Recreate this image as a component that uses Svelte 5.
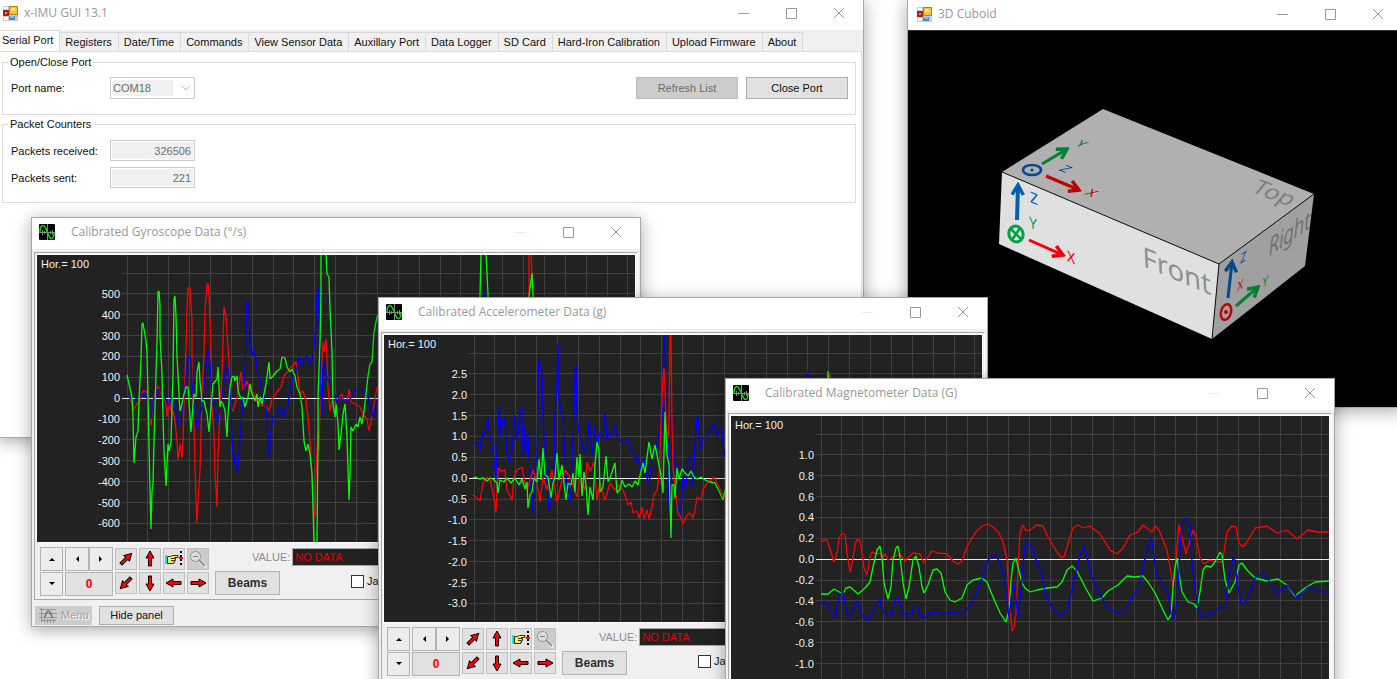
<script lang="ts">
  const tabs = [
    'Serial Port',
    'Registers',
    'Date/Time',
    'Commands',
    'View Sensor Data',
    'Auxillary Port',
    'Data Logger',
    'SD Card',
    'Hard-Iron Calibration',
    'Upload Firmware',
    'About',
  ];

  let activeTab = $state('Serial Port');

  // plot area, in chart units
  const chart = { width: 598, height: 287, left: 90, top: 18, step: 20.87, zero: 143 };
  const columns = Array.from({ length: 25 }, (_, i) => chart.left + i * chart.step);
  const rows = Array.from({ length: 13 }, (_, i) => chart.top + i * chart.step);

  const scopes = [
    {
      id: 'gyro',
      title: 'Calibrated Gyroscope Data (°/s)',
      labels: ['500', '400', '300', '200', '100', '0', '-100', '-200', '-300', '-400', '-500', '-600'],
      traces: [
        {
          color: '#ff0000',
          points: '90,141 93,142 95,149 97,154 100,149 103,146 106,136 110,137 112,149 114,171 116,146 118,139 121,131 123,136 126,142 129,149 130,162 132,146 135,159 136,156 138,166 140,186 141,205 143,189 145,203 146,186 147,149 149,94 150,54 151,33 153,33 154,51 155,64 155,119 157,169 158,212 159,246 160,268 161,246 163,216 164,179 165,139 167,97 168,54 170,30 171,28 172,41 173,64 174,97 175,152 177,179 178,219 179,234 180,252 181,202 183,152 185,119 186,87 187,52 189,61 190,77 192,107 193,152 196,156 199,146 201,139 203,122 204,117 206,136 210,126 213,136 216,137 220,146 225,151 228,149 232,156 235,144 240,137 244,132 247,121 251,116 255,111 259,107 261,121 263,139 266,136 269,146 271,162 273,186 275,219 277,262 278,262 279,219 281,176 282,196 283,152 285,104 286,87 287,97 289,84 290,104 291,132 293,156 295,146 297,149 301,144 305,139 307,147 310,146 312,134 314,147 318,149 323,152 326,159 330,164 332,176 335,162 337,149 340,132 370,150 420,120 470,150 490,90 492,39 492,-2 494,-2 496,41 500,150',
        },
        {
          color: '#0000ff',
          points: '90,141 93,143 96,145 103,142 108,137 111,146 114,164 116,146 119,139 121,134 125,137 128,142 131,151 135,142 137,149 139,159 141,171 144,166 146,149 148,132 150,111 152,101 154,104 155,126 157,152 160,174 163,159 165,152 167,132 170,104 171,94 173,107 175,146 178,157 181,167 183,152 186,136 188,117 190,109 192,121 194,149 195,186 197,209 198,199 200,218 202,199 204,172 206,142 208,121 209,77 210,47 212,47 213,87 215,101 217,93 219,104 221,121 223,124 225,139 228,146 230,162 231,192 232,202 234,176 236,162 240,159 242,152 245,156 246,162 248,154 251,149 253,136 256,122 260,114 262,101 265,111 267,104 270,101 273,109 276,102 278,81 280,41 281,31 282,54 283,119 285,162 286,111 288,107 290,124 293,127 296,134 300,147 303,142 308,147 313,144 318,136 323,134 328,136 331,142 336,162 340,146 380,120 440,130 448,37 452,140',
        },
        {
          color: '#00ff00',
          points: '90,120 95,142 96,162 97,208 99,182 101,176 102,146 104,104 105,69 106,68 109,86 110,97 111,142 113,236 114,274 115,236 116,229 117,186 119,119 120,87 121,37 122,36 123,51 123,81 125,119 126,162 127,196 129,231 130,209 131,189 132,196 134,187 135,149 136,119 137,44 138,41 139,61 140,101 142,139 143,156 145,149 147,139 149,132 151,132 153,162 154,177 156,149 157,139 159,142 160,117 162,107 163,126 165,146 167,146 170,159 172,177 174,152 176,129 180,124 181,112 183,152 184,146 186,149 188,156 190,182 191,159 193,132 195,122 197,121 198,126 200,121 201,136 204,144 206,142 208,152 211,142 213,129 215,139 218,146 220,139 221,152 223,142 225,149 229,129 231,114 232,107 233,124 236,121 240,116 243,114 245,102 248,103 250,112 253,117 255,114 258,121 260,132 263,139 265,152 267,186 269,196 271,189 273,199 275,219 276,252 277,288 280,288 281,186 281,142 283,87 284,37 284,-2 289,-2 290,19 292,22 293,54 295,97 296,149 298,162 299,149 301,169 302,195 304,179 306,159 308,149 310,182 312,245 313,219 314,172 316,176 319,169 321,172 323,162 325,169 327,156 329,139 331,121 333,109 335,107 337,77 340,62 346,50 360,150 430,140 443,41 444,-2 449,-2 451,39 455,140 488,140 492,41 495,18 496,40 500,150',
        },
      ],
    },
    {
      id: 'accel',
      title: 'Calibrated Accelerometer Data (g)',
      labels: ['2.5', '2.0', '1.5', '1.0', '0.5', '0.0', '-0.5', '-1.0', '-1.5', '-2.0', '-2.5', '-3.0'],
      traces: [
        {
          color: '#0000ff',
          points: '89,108 93,108 96,115 98,98 99,103 103,88 104,82 106,102 109,115 112,145 113,115 115,72 116,102 117,82 119,92 121,82 123,118 125,127 128,115 131,80 132,105 134,98 136,75 138,73 139,122 141,92 142,118 144,98 145,122 148,162 149,178 150,142 153,122 154,55 155,25 157,35 158,38 159,82 161,118 163,148 165,177 168,155 170,135 171,78 173,55 174,8 175,62 177,78 179,83 181,122 183,158 186,167 188,128 190,82 191,35 192,29 193,78 195,98 198,108 200,118 203,112 205,85 207,105 208,120 211,90 213,122 215,98 219,102 221,78 223,105 225,98 229,100 231,90 233,102 238,107 244,105 248,115 251,122 253,128 254,120 257,135 260,125 263,142 265,150 268,122 271,118 275,98 277,115 278,88 280,-2 281,-2 282,115 284,88 285,168 287,202 288,82 290,122 292,128 294,172 297,178 299,142 302,152 304,123 307,122 309,152 311,108 313,82 314,82 316,115 319,103 323,102 327,95 330,88 333,102 337,92 339,108 341,122 400,110 422,80 424,36 426,90',
        },
        {
          color: '#ff0000',
          points: '89,160 93,163 96,166 99,148 103,142 106,145 109,158 112,177 114,135 115,133 117,136 121,135 123,155 128,165 130,142 133,135 138,132 140,143 143,155 146,145 149,135 153,148 156,167 159,142 163,155 168,135 173,167 178,145 181,135 186,142 193,162 196,142 201,155 203,127 206,136 208,132 210,127 213,165 216,148 221,165 226,148 231,155 234,150 239,155 242,163 244,170 247,167 249,178 253,176 255,183 258,172 260,184 263,175 265,184 268,172 270,160 273,155 275,142 277,88 279,42 280,33 281,55 283,115 285,88 286,-2 287,-2 288,88 289,132 291,152 294,178 297,183 299,189 303,180 306,178 309,183 311,175 313,162 317,165 319,155 323,148 327,145 330,142 333,148 338,158 341,163 400,150 440,120 446,38 450,140',
        },
        {
          color: '#00ff00',
          points: '89,143 92,142 95,144 99,143 103,146 106,143 109,144 113,148 114,158 116,145 120,147 123,143 127,148 131,143 135,150 138,144 141,154 143,147 144,173 146,160 148,157 150,143 153,147 155,124 157,145 159,113 161,140 164,142 167,163 169,148 171,142 173,118 175,145 178,130 180,149 182,165 184,148 187,150 189,138 191,157 193,122 195,142 196,119 198,161 200,137 202,150 204,180 206,152 209,165 211,130 213,107 215,115 216,157 219,152 222,121 224,147 227,140 231,128 233,158 236,154 238,145 241,152 245,149 248,152 251,146 254,150 257,136 259,128 261,138 265,107 268,124 271,110 273,120 277,140 279,158 281,77 283,120 285,130 287,203 288,150 290,150 291,163 293,133 295,144 298,134 301,138 304,141 307,136 310,142 313,144 317,142 321,145 326,147 331,148 336,158 339,165 341,155 400,150 440,120 444,36 450,140',
        },
      ],
    },
    {
      id: 'magneto',
      title: 'Calibrated Magnetometer Data (G)',
      labels: ['1.0', '0.8', '0.6', '0.4', '0.2', '0.0', '-0.2', '-0.4', '-0.6', '-0.8', '-1.0'],
      traces: [
        {
          color: '#ff0000',
          points: '90,126 93,124 96,124 100,136 103,146 106,137 108,122 111,117 114,119 116,137 119,156 121,147 124,129 126,123 129,125 131,137 133,152 136,159 139,141 141,136 146,138 149,137 151,142 154,138 157,144 162,141 169,138 174,145 182,137 189,138 193,147 201,135 207,137 216,138 222,145 227,148 231,145 236,131 244,117 251,110 257,108 262,111 268,117 272,126 276,144 278,181 281,215 283,212 285,197 287,154 289,117 292,109 295,115 301,113 305,109 312,110 317,121 326,136 330,141 333,141 339,121 342,112 347,109 352,112 359,110 369,118 379,134 386,138 392,132 399,119 407,116 412,109 421,116 424,110 428,114 436,134 439,151 442,171 444,154 446,131 448,109 451,121 455,138 459,124 462,114 465,121 469,142 473,148 479,144 486,146 491,146 493,136 496,116 501,110 505,111 508,127 512,131 516,126 524,112 536,110 546,117 556,114 566,123 577,114 586,116 598,116',
        },
        {
          color: '#00ff00',
          points: '90,178 97,178 103,173 112,178 115,172 119,171 127,178 134,172 139,166 142,151 146,134 149,130 151,141 153,167 157,183 160,171 162,144 165,132 167,130 169,141 172,167 175,183 178,171 182,144 185,140 188,151 191,171 193,177 197,169 202,154 206,153 210,157 214,176 219,184 224,186 231,182 236,169 242,164 251,162 256,166 262,181 269,197 275,206 278,194 280,164 282,147 285,142 287,151 291,167 294,172 299,176 306,174 316,172 326,171 331,166 336,154 341,150 346,155 354,171 362,185 371,182 377,175 387,169 396,160 404,161 412,160 417,166 424,177 432,194 437,204 440,199 442,171 444,151 446,142 448,157 451,176 457,186 463,188 466,192 469,176 472,154 475,150 480,151 484,146 489,136 491,139 494,164 498,177 504,166 508,149 511,147 516,154 524,162 536,165 547,163 556,169 564,180 574,172 584,166 598,165',
        },
        {
          color: '#0000ff',
          points: '90,187 94,185 97,188 101,197 104,201 106,192 109,179 112,176 114,187 117,201 120,202 124,187 127,185 131,199 136,204 142,196 146,187 149,184 153,197 161,199 164,184 167,182 172,198 181,198 183,189 186,190 190,200 194,201 199,197 206,196 212,198 222,196 231,198 237,192 244,181 251,162 257,144 264,139 269,146 274,167 278,201 280,184 282,167 284,174 287,201 290,174 292,151 294,129 296,126 301,131 306,147 311,157 314,177 321,192 330,200 336,194 341,174 346,151 350,136 353,130 356,141 361,161 367,174 376,191 386,197 394,194 401,181 408,172 412,151 416,134 420,122 422,131 425,157 431,167 437,177 440,197 443,203 446,187 448,154 450,117 453,104 456,102 459,109 461,147 464,174 467,191 471,201 481,198 489,191 494,192 497,167 502,142 504,144 506,167 510,187 516,184 524,162 533,157 539,167 546,177 556,169 567,182 577,171 587,175 598,176',
        },
      ],
    },
  ];

  const arrows = {
    'up-right': 45,
    up: 0,
    'down-left': 225,
    down: 180,
    left: 270,
    right: 90,
  };
</script>

{#snippet formIcon()}
  <svg class="app-icon" width="15" height="15" viewBox="0 0 15 15" aria-hidden="true">
    <rect width="15" height="15" fill="#c8ccd2" />
    <path d="M1 1h4v2H1zM1 11h4v3H1z" fill="#fff" />
    <rect x="6" y="0" width="9" height="9" fill="#b8860b" />
    <rect x="7" y="1" width="7" height="7" fill="#f9c22e" />
    <rect x="8" y="2" width="4" height="3" fill="#fde08a" />
    <rect x="0" y="4" width="6" height="6" fill="#a3221a" />
    <rect x="2" y="6" width="2" height="2" fill="#f08a7c" />
    <rect x="6" y="10" width="6" height="4" fill="#3b8fe0" />
    <rect x="7" y="10" width="4" height="2" fill="#7fbcf2" />
  </svg>
{/snippet}

{#snippet scopeIcon()}
  <svg class="app-icon" width="16" height="16" viewBox="0 0 16 16" aria-hidden="true">
    <rect width="16" height="16" rx="1" fill="#000" />
    <path d="M8.500 0v16M0 8.500h16M3.500 6v5M5.500 7v3M11.500 7v3M13.500 6v5" stroke="#8a8a8a" />
    <path d="M1 8C1 4 2 1.500 4 1.500S7 5 8.500 8.500s2 6 4 6S15 11 15 8" fill="none" stroke="#00e000" stroke-width="1.500" />
  </svg>
{/snippet}

{#snippet windowButtons()}
  <div class="window-buttons">
    <button class="win-btn minimize" aria-label="Minimize">
      <svg width="12" height="12" viewBox="0 0 12 12"><path d="M1 6.500h11" /></svg>
    </button>
    <button class="win-btn" aria-label="Maximize">
      <svg width="12" height="12" viewBox="0 0 12 12"><path d="M1.500 1.500h10v10h-10z" /></svg>
    </button>
    <button class="win-btn" aria-label="Close">
      <svg width="12" height="12" viewBox="0 0 12 12"><path d="M1 1l10 10M11 1L1 11" /></svg>
    </button>
  </div>
{/snippet}

{#snippet arrowButton(name)}
  <button class="tool-btn" aria-label={name}>
    <svg width="18" height="18" viewBox="0 0 18 18">
      <path
        d="M9 1l4 7h-2.500v8h-3V8H5z"
        fill="#ff0000"
        stroke="#000"
        transform="rotate({arrows[name]} 9 9)"
      />
    </svg>
  </button>
{/snippet}

<div class="desktop">
  <section class="window main-window">
    <header class="title-bar">
      {@render formIcon()}
      <h1>x-IMU GUI 13.1</h1>
      {@render windowButtons()}
    </header>

    <nav class="tab-strip">
      {#each tabs as tab}
        <button class="tab" class:active={tab === activeTab} onclick={() => (activeTab = tab)}>{tab}</button>
      {/each}
    </nav>

    <div class="tab-page">
      <fieldset class="port-group">
        <legend>Open/Close Port</legend>
        <div class="field">
          <label for="port-name">Port name:</label>
          <div class="select-wrap">
            <select id="port-name" disabled>
              <option>COM18</option>
            </select>
            <svg class="chevron" width="10" height="6" viewBox="0 0 10 6" aria-hidden="true">
              <path d="M1 1l4 4 4-4" />
            </svg>
          </div>
        </div>
        <div class="port-actions">
          <button class="push-btn" disabled>Refresh List</button>
          <button class="push-btn">Close Port</button>
        </div>
      </fieldset>

      <fieldset class="counter-group">
        <legend>Packet Counters</legend>
        <div class="field">
          <label for="received">Packets received:</label>
          <input id="received" type="text" value="326506" disabled />
        </div>
        <div class="field">
          <label for="sent">Packets sent:</label>
          <input id="sent" type="text" value="221" disabled />
        </div>
      </fieldset>
    </div>
  </section>

  <section class="window cuboid-window">
    <header class="title-bar">
      {@render formIcon()}
      <h1>3D Cuboid</h1>
      {@render windowButtons()}
    </header>
    <div class="viewport">
      <svg class="cuboid" width="489" height="377" viewBox="0 1 489 377">
        <defs>
          {#each [['red', '#f00000'], ['dark-red', '#c00000'], ['green', '#007f35'], ['blue', '#0060b0'], ['dark-blue', '#004a8c']] as [id, color]}
            <marker id="head-{id}" viewBox="0 0 10 10" refX="8" refY="5" markerWidth="14" markerHeight="14" markerUnits="userSpaceOnUse" orient="auto">
              <path d="M1 1l7 4-7 4" fill="none" stroke={color} stroke-width="2.500" />
            </marker>
          {/each}
        </defs>

        <polygon points="195,79 406,164 311,234 94,142" fill="#b0b0b0" />
        <polygon points="94,142 311,234 304,309 91,214" fill="#e0e0e0" />
        <polygon points="311,234 406,164 397,236 304,309" fill="#a0a0a0" />
        <path d="M94 142L311 234L406 164M311 234L304 309" fill="none" stroke="#111" />

        <!-- top face -->
        <ellipse cx="124" cy="140" rx="9" ry="5" fill="none" stroke="#004a8c" stroke-width="2.500" />
        <circle cx="124" cy="140" r="1.500" fill="#004a8c" />
        <path d="M134 134L159 119" stroke="#007f35" stroke-width="3" marker-end="url(#head-green)" />
        <path d="M138 146L171 160" stroke="#c00000" stroke-width="3" marker-end="url(#head-dark-red)" />
        <text class="axis" transform="matrix(.9 .35 -.7 .5 166 115)" fill="#007f35">Y</text>
        <text class="axis" transform="matrix(.9 .35 -.7 .5 150 140)" fill="#004a8c">Z</text>
        <text class="axis" transform="matrix(.9 .35 -.7 .5 176 164)" fill="#c00000">X</text>
        <text class="face" transform="matrix(.82 .33 -.5 .6 342 161)" fill="#808080">Top</text>

        <!-- front face -->
        <path d="M109 190L110 155" stroke="#0060b0" stroke-width="4" marker-end="url(#head-blue)" />
        <path d="M121 210L155 225" stroke="#f00000" stroke-width="3" marker-end="url(#head-red)" />
        <ellipse cx="108" cy="204" rx="7" ry="8" fill="#e0e0e0" stroke="#00a048" stroke-width="3" transform="rotate(-20 108 204)" />
        <path d="M103 199l10 10M112 198l-8 12" stroke="#00a048" stroke-width="2.500" />
        <text class="axis" transform="matrix(.93 .4 0 1 122 172)" fill="#0060b0">Z</text>
        <text class="axis" transform="matrix(.93 .4 0 1 121 197)" fill="#00a048">Y</text>
        <text class="axis" transform="matrix(.93 .4 0 1 159 231)" fill="#f00000">X</text>
        <text class="face" transform="matrix(.98 .42 .05 1 235 236)" fill="#909090">Front</text>

        <!-- right face -->
        <ellipse cx="318" cy="282" rx="5" ry="8" fill="none" stroke="#c00000" stroke-width="2.500" transform="rotate(15 318 282)" />
        <circle cx="318" cy="282" r="2" fill="#c00000" />
        <path d="M320 268L324 232" stroke="#004a8c" stroke-width="3" marker-end="url(#head-dark-blue)" />
        <path d="M328 276L350 257" stroke="#007f35" stroke-width="3" marker-end="url(#head-green)" />
        <text class="axis" transform="matrix(.65 -.45 -.1 .9 332 234)" fill="#004a8c">Z</text>
        <text class="axis" transform="matrix(.65 -.45 -.1 .9 329 262)" fill="#c00000">X</text>
        <text class="axis" transform="matrix(.65 -.45 -.1 .9 354 258)" fill="#007f35">Y</text>
        <text class="face" transform="matrix(.6 -.42 -.1 .95 360 227)" fill="#707070">Right</text>
      </svg>
    </div>
  </section>

  {#each scopes as scope}
    <section class="window scope-window {scope.id}">
      <header class="title-bar">
        {@render scopeIcon()}
        <h1>{scope.title}</h1>
        {@render windowButtons()}
      </header>

      <div class="scope-frame">
        <svg class="plot" viewBox="0 0 {chart.width} {chart.height}">
          <rect width={chart.width} height={chart.height} fill="#222222" />
          <g class="grid">
            {#each columns as x}
              <line x1={x} y1="0" x2={x} y2={chart.height} />
            {/each}
            {#each rows as y}
              <line x1="85" y1={y} x2={chart.width} y2={y} />
            {/each}
          </g>
          <line class="zero" x1="85" y1={chart.zero} x2={chart.width} y2={chart.zero} />
          {#each scope.traces as trace}
            <polyline class="trace" points={trace.points} stroke={trace.color} />
          {/each}
          <text class="plot-text" x="4" y="13">Hor.= 100</text>
          {#each scope.labels as label, i}
            <text class="plot-text" x="83" y={chart.top + (i + 1) * chart.step + 4} text-anchor="end">{label}</text>
          {/each}
        </svg>

        <div class="panel">
          <div class="stepper">
            <button class="flat-btn" aria-label="Increase"><svg width="6" height="4"><path d="M0 4l3-3 3 3z" /></svg></button>
            <button class="flat-btn" aria-label="Decrease"><svg width="6" height="4"><path d="M0 0l3 3 3-3z" /></svg></button>
          </div>
          <div class="shifter">
            <button class="flat-btn" aria-label="Previous"><svg width="4" height="6"><path d="M4 0L1 3l3 3z" /></svg></button>
            <button class="flat-btn" aria-label="Next"><svg width="4" height="6"><path d="M0 0l3 3-3 3z" /></svg></button>
            <button class="flat-btn beam-number">0</button>
          </div>
          <div class="tools">
            {@render arrowButton('up-right')}
            {@render arrowButton('up')}
            <button class="tool-btn" aria-label="Pick">
              <svg width="18" height="18" viewBox="0 0 18 18">
                <rect x="0" y="5" width="2" height="9" fill="#00e5e5" />
                <path d="M2.500 6.500h3l2-1h5.500v2H9.500v1h1v2h-1v2h-1v1h-6z" fill="#f6ee50" stroke="#000" stroke-width=".8" />
                <path d="M6 8.500h3.500M6 10.500h3" stroke="#000" stroke-width=".8" />
                <path d="M16 1v16" stroke="#000" stroke-width="2" stroke-dasharray="2 2" />
                <path d="M14 8h4" stroke="#f00" stroke-width="2" />
              </svg>
            </button>
            <button class="tool-btn zoom-btn" aria-label="Zoom out" disabled>
              <svg width="18" height="18" viewBox="0 0 18 18" fill="none">
                <path d="M11 11l6 6" stroke="#fff" stroke-width="3" />
                <path d="M10 10l6 6" stroke="#909090" stroke-width="2" />
                <circle cx="6.500" cy="6.500" r="5" fill="#ddd" stroke="#909090" />
                <path d="M4 6.500h5" stroke="#808080" />
              </svg>
            </button>
            {@render arrowButton('down-left')}
            {@render arrowButton('down')}
            {@render arrowButton('left')}
            {@render arrowButton('right')}
          </div>
          <div class="readout">
            <div class="value-row">
              <label for="value-{scope.id}">VALUE:</label>
              <input id="value-{scope.id}" class="value-box" type="text" value="NO DATA" readonly />
            </div>
            <div class="beam-row">
              <button class="flat-btn beams-btn">Beams</button>
              <label class="check"><input type="checkbox" />Jalousie</label>
            </div>
          </div>
        </div>
      </div>

      <footer class="scope-footer">
        <button class="menu-btn" disabled>
          <svg width="18" height="16" viewBox="0 0 18 16" fill="none" aria-hidden="true">
            <path d="M1 2.500h16M0 6.500h18M0 10.500h18M2.500 1v14M5.500 12v4M8.500 12v4M11.500 12v4M14.500 12v4M2 13.500h15" stroke="#959595" />
            <path d="M5 10c2 0 2-6 4.500-6S12 10 14 10" stroke="#707070" stroke-width="1.500" />
          </svg>
          Menu
        </button>
        <button class="hide-btn">Hide panel</button>
      </footer>
    </section>
  {/each}
</div>

<style>
  :global(body) {
    background: #ffffff;
  }

  .desktop {
    position: relative;
    height: 100vh;
    overflow: hidden;
    font-family: 'Liberation Sans', Arial, sans-serif;
    font-size: 11px;
    line-height: 14px;
    color: #101010;
  }

  .desktop *,
  .desktop *::before {
    box-sizing: border-box;
  }

  button,
  input,
  select {
    margin: 0;
    font: inherit;
    color: inherit;
  }

  button {
    padding: 0;
    border: none;
    background: none;
  }

  .window {
    position: absolute;
    display: flex;
    flex-direction: column;
    background: #f0f0f0;
    border: 1px solid #a8a8a8;
    box-shadow: 0 3px 16px rgba(0, 0, 0, 0.35);
  }

  .main-window {
    top: -1px;
    left: -2px;
    width: 866px;
    height: 439px;
  }

  .cuboid-window {
    top: -1px;
    left: 907px;
    right: -6px;
  }

  .gyro {
    top: 217px;
    left: 31px;
  }

  .accel {
    top: 297px;
    left: 378px;
  }

  .magneto {
    top: 378px;
    left: 725px;
  }

  .scope-window {
    width: 610px;
  }

  .title-bar {
    display: flex;
    align-items: center;
    height: 30px;
    padding-left: 8px;
    background: #ffffff;
  }

  .main-window .title-bar {
    padding: 0 0 4px 4px;
  }

  .cuboid-window .title-bar {
    padding-left: 9px;
    padding-bottom: 2px;
  }

  .scope-window .title-bar {
    height: 31px;
    padding-left: 7px;
    padding-bottom: 3px;
  }

  .app-icon {
    flex: none;
  }

  h1 {
    flex: 1;
    margin: 0 0 0 6px;
    font-family: 'Open Sans', 'Noto Sans', sans-serif;
    font-size: 12px;
    font-weight: 400;
    line-height: 16px;
    color: #999999;
  }

  .scope-window h1 {
    margin-left: 16px;
  }

  .window-buttons {
    display: flex;
  }

  .win-btn {
    display: grid;
    place-items: center;
    width: 48px;
    height: 28px;
  }

  .win-btn path {
    fill: none;
    stroke: #999999;
  }

  .scope-window .minimize path {
    stroke: #ececec;
  }

  /* serial port window */

  .tab-strip {
    display: flex;
    align-items: flex-end;
    height: 21px;
    padding-left: 1px;
  }

  .tab {
    height: 19px;
    padding: 0 6px 0 5px;
    border: 1px solid #d9d9d9;
    border-width: 1px 1px 0 0;
    background: #f0f0f0;
    white-space: nowrap;
  }

  .tab-strip .tab.active {
    height: 22px;
    margin-bottom: -1px;
    padding: 0 6px 4px 2px;
    background: #ffffff;
  }

  .tab-page {
    flex: 1;
    margin-right: 1px;
    padding: 3px 5px 0 3px;
    border: 1px solid #dcdcdc;
    border-width: 1px 1px 0 0;
    background: #ffffff;
  }

  fieldset {
    margin: 0 0 2px;
    padding: 0 7px 0 8px;
    border: 1px solid #dcdcdc;
  }

  legend {
    margin-left: -3px;
    padding: 0 2px;
  }

  .port-group {
    display: flex;
    justify-content: space-between;
    align-items: flex-start;
    height: 60px;
    padding-top: 8px;
  }

  .counter-group {
    display: flex;
    flex-direction: column;
    gap: 6px;
    height: 86px;
    padding-top: 9px;
  }

  .field {
    display: flex;
    align-items: center;
  }

  .field label {
    width: 99px;
  }

  .field input {
    width: 85px;
    height: 21px;
    padding: 0 3px;
    border: 1px solid #cccccc;
    outline: 1px solid #ffffff;
    outline-offset: -2px;
    background: #f0f0f0;
    color: #6d6d6d;
    text-align: right;
  }

  .select-wrap {
    display: grid;
    align-items: center;
  }

  .select-wrap > * {
    grid-area: 1 / 1;
  }

  select {
    width: 85px;
    height: 22px;
    padding: 0 2px;
    appearance: none;
    border: 1px solid #cccccc;
    border-radius: 0;
    background: linear-gradient(#f0f0f0, #f0f0f0) 2px 2px / 60px 16px no-repeat #ffffff;
    opacity: 1;
    color: #6d6d6d;
  }

  .chevron {
    justify-self: end;
    margin-right: 4px;
    fill: none;
    stroke: #bcbcbc;
    pointer-events: none;
  }

  .port-actions {
    display: flex;
    gap: 8px;
  }

  .push-btn {
    width: 102px;
    height: 22px;
    border: 1px solid #adadad;
    background: #e1e1e1;
  }

  .push-btn:disabled {
    border-color: #bfbfbf;
    background: #cccccc;
    color: #6d6d6d;
  }

  /* cuboid window */

  .viewport {
    height: 377px;
    border-top: 1px solid #333333;
    background: #000000;
    overflow: hidden;
  }

  .cuboid {
    display: block;
  }

  .face {
    font-family: 'Noto Sans', sans-serif;
    font-size: 28px;
  }

  .axis {
    font-family: 'Noto Sans', sans-serif;
    font-size: 15px;
  }

  /* oscilloscope windows */

  .scope-frame {
    margin: 3px 2px 0;
    padding: 2px 2px 0;
    border: 1px solid #a8a8a8;
    border-right-color: #ffffff;
    background: #f0f0f0;
  }

  .plot {
    display: block;
    width: 100%;
    height: auto;
    outline: 1px solid #ffffff;
  }

  .grid line {
    stroke: #404040;
    shape-rendering: crispEdges;
  }

  .zero {
    stroke: #e8e8e8;
    shape-rendering: crispEdges;
  }

  .trace {
    fill: none;
    stroke-width: 1.3;
    stroke-linejoin: bevel;
  }

  .plot-text {
    font-size: 11px;
    fill: #f0f0f0;
  }

  .panel {
    display: flex;
    gap: 2px;
    height: 57px;
    padding: 5px 0 0 3px;
  }

  .stepper,
  .shifter,
  .tools {
    display: grid;
    align-content: start;
    gap: 1px 0;
  }

  .shifter {
    grid-template-columns: 24px 24px;
  }

  .tools {
    grid-template-columns: repeat(4, 22px);
    gap: 2px;
    padding-top: 1px;
  }

  .flat-btn {
    display: grid;
    place-items: center;
    min-width: 23px;
    height: 24px;
    border: 1px solid #b4b4b4;
    background: #ececec;
  }

  .beam-number {
    grid-column: span 2;
    background: #e1e1e1;
    color: #ff0000;
    font-size: 12px;
    font-weight: 700;
  }

  .tool-btn {
    display: grid;
    place-items: center;
    height: 22px;
    border: 1px solid #c0c0c0;
    background: #e1e1e1;
  }

  .zoom-btn {
    background: #cccccc;
  }

  .readout {
    display: flex;
    flex: 1;
    flex-direction: column;
    gap: 5px;
    padding-left: 4px;
  }

  .value-row {
    display: flex;
    align-items: center;
    gap: 2px;
    padding: 1px 2px 0 37px;
    color: #8c8c8c;
  }

  .value-box {
    flex: 1;
    height: 18px;
    padding: 0 2px;
    border: 1px solid #a8a8a8;
    border-radius: 0;
    background: #222222;
    color: #e00000;
  }

  .beam-row {
    display: flex;
    align-items: flex-start;
    gap: 71px;
  }

  .beams-btn {
    width: 65px;
    background: #e1e1e1;
    font-size: 12px;
    font-weight: 700;
    color: #303030;
  }

  .check {
    display: flex;
    align-items: center;
    gap: 3px;
    padding-top: 3px;
  }

  .check input {
    appearance: none;
    width: 13px;
    height: 13px;
    border: 1px solid #333333;
    background: #ffffff;
  }

  .scope-footer {
    display: flex;
    align-items: center;
    gap: 7px;
    height: 26px;
    padding: 5px 3px 1px;
  }

  .menu-btn {
    display: flex;
    align-items: center;
    gap: 4px;
    width: 57px;
    height: 19px;
    padding-left: 4px;
    background: #cccccc;
    color: #a0a0a0;
    text-shadow: 1px 1px #ffffff;
  }

  .hide-btn {
    width: 75px;
    height: 19px;
    border: 1px solid #adadad;
    background: #e1e1e1;
  }
</style>
